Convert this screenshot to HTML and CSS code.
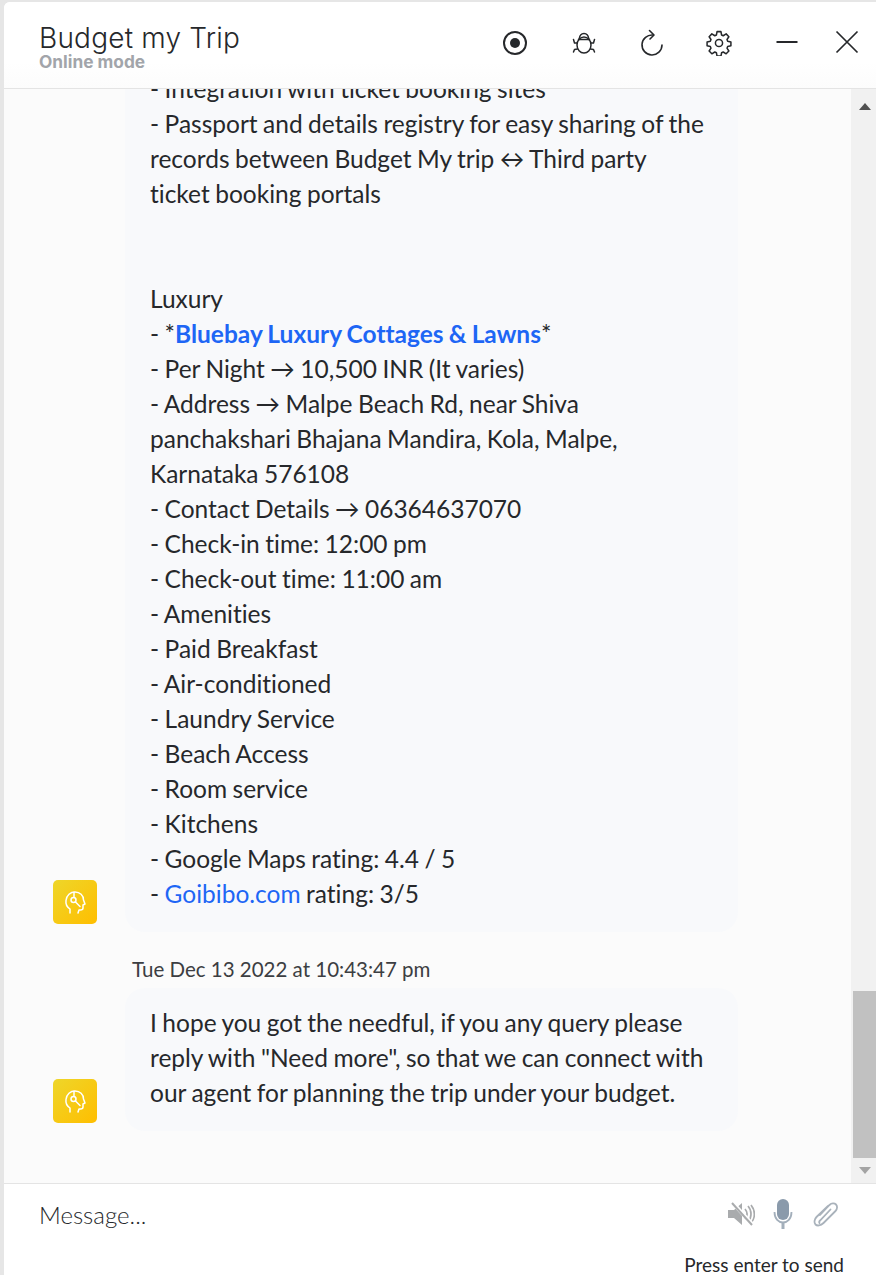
FILE: index.html
```html
<!DOCTYPE html>
<html lang="en">
<head>
<meta charset="utf-8">
<title>Budget my Trip</title>
<link rel="stylesheet" href="styles.css">
</head>
<body>
<div class="window">
  <header class="header">
    <div class="titles">
      <div class="title">Budget my Trip</div>
      <div class="subtitle">Online mode</div>
    </div>
    <div class="tools">
      <svg class="tool t-rec" width="26" height="26" viewBox="0 0 26 26"><circle cx="13" cy="13" r="11" fill="none" stroke="#26282b" stroke-width="2"/><circle cx="13" cy="13" r="5" fill="#26282b"/></svg>
      <svg class="tool t-bug" width="26" height="26" viewBox="0 0 26 26" fill="none" stroke="#26282b" stroke-width="1.500" stroke-linecap="round" stroke-linejoin="round"><ellipse cx="13" cy="15" rx="7" ry="8"/><path d="M8 9.500C8.500 5.500 10.500 3.500 13 3.500s4.500 2 5 6"/><path d="M7.500 9.500h11"/><path d="M6 13H3.500L2.500 9.500M20 13h2.500l1-3.500M6.500 19l-3 .5-1 2.500M19.500 19l3 .5 1 2.500"/></svg>
      <svg class="tool t-redo" width="26" height="28" viewBox="0 0 26 28" fill="none" stroke="#26282b" stroke-width="1.600" stroke-linecap="round" stroke-linejoin="round"><path d="M14 6A10 10 0 1 0 23 16"/><path d="M10.500 1.500L15 6l-4 4"/></svg>
      <svg class="tool t-gear" width="26" height="26" viewBox="0 0 24 24" fill="none" stroke="#26282b" stroke-width="1.400" stroke-linejoin="round"><circle cx="12" cy="12" r="3.300"/><path d="M10.200 1.500h3.600l.6 3.100 1.500.7 2.700-1.700 2.500 2.600-1.700 2.600.6 1.500 3 .7v3.600l-3 .7-.6 1.500 1.700 2.600-2.500 2.600-2.700-1.700-1.500.7-.6 3.100h-3.600l-.6-3.100-1.500-.7-2.700 1.700-2.500-2.600 1.700-2.600-.6-1.500-3-.7v-3.600l3-.7.6-1.500-1.700-2.600 2.500-2.600 2.700 1.700 1.500-.7z"/></svg>
      <svg class="tool t-min" width="24" height="24" viewBox="0 0 24 24"><path d="M1.500 12h21" stroke="#26282b" stroke-width="2"/></svg>
      <svg class="tool t-close" width="24" height="24" viewBox="0 0 24 24"><path d="M1.500 1.500l21 21M22.500 1.500l-21 21" stroke="#26282b" stroke-width="1.700"/></svg>
    </div>
  </header>

  <main class="chat">
    <div class="messages">
      <div class="message">
        <div class="avatar"><svg width="26" height="26" viewBox="0 0 26 26" fill="none" stroke="#fff" stroke-width="1.500" stroke-linecap="round" stroke-linejoin="round"><path d="M8 24v-4C5 18 3.500 15 4 11.500 4.500 6 8.500 3 13 3c5 0 8.500 3.500 8.500 8l1.500 4-2 1v3c0 1.500-1 2-2.500 2h-1.500l-1 3"/><path d="M12 3.200V8"/><circle cx="11.500" cy="11" r="2.500"/><path d="M13.500 13l4.500 4.500"/></svg></div>
        <div class="bubble">
          <p>- Integration with ticket booking sites</p>
          <p>- Passport and details registry for easy sharing of the</p>
          <p>records between Budget My trip ↔ Third party</p>
          <p>ticket booking portals</p>
          <p>&nbsp;</p>
          <p>&nbsp;</p>
          <p>Luxury</p>
          <p>- *<a class="hotel" href="#">Bluebay Luxury Cottages &amp; Lawns</a>*</p>
          <p>- Per Night → 10,500 INR (It varies)</p>
          <p>- Address → Malpe Beach Rd, near Shiva</p>
          <p>panchakshari Bhajana Mandira, Kola, Malpe,</p>
          <p>Karnataka 576108</p>
          <p>- Contact Details → 06364637070</p>
          <p>- Check-in time: 12:00 pm</p>
          <p>- Check-out time: 11:00 am</p>
          <p>- Amenities</p>
          <p>- Paid Breakfast</p>
          <p>- Air-conditioned</p>
          <p>- Laundry Service</p>
          <p>- Beach Access</p>
          <p>- Room service</p>
          <p>- Kitchens</p>
          <p>- Google Maps rating: 4.4 / 5</p>
          <p>- <a class="link" href="#">Goibibo.com</a> rating: 3/5</p>
        </div>
      </div>
      <div class="stamp">Tue Dec 13 2022 at 10:43:47 pm</div>
      <div class="message">
        <div class="avatar"><svg width="26" height="26" viewBox="0 0 26 26" fill="none" stroke="#fff" stroke-width="1.500" stroke-linecap="round" stroke-linejoin="round"><path d="M8 24v-4C5 18 3.500 15 4 11.500 4.500 6 8.500 3 13 3c5 0 8.500 3.500 8.500 8l1.500 4-2 1v3c0 1.500-1 2-2.500 2h-1.500l-1 3"/><path d="M12 3.200V8"/><circle cx="11.500" cy="11" r="2.500"/><path d="M13.500 13l4.500 4.500"/></svg></div>
        <div class="bubble">
          <p>I hope you got the needful, if you any query please</p>
          <p>reply with "Need more", so that we can connect with</p>
          <p>our agent for planning the trip under your budget.</p>
        </div>
      </div>
    </div>
    <div class="scrollbar">
      <div class="arrow arrow-up"></div>
      <div class="track"><div class="thumb"></div></div>
      <div class="arrow arrow-down"></div>
    </div>
  </main>

  <footer class="composer">
    <div class="input-row">
      <div class="placeholder">Message...</div>
      <div class="input-icons">
        <svg width="28" height="28" viewBox="0 0 28 28" fill="none"><path d="M1 10h6l8-7v22l-8-7H1z" fill="#a9abad"/><path d="M18 9c2.500 3 2.500 7 0 10M21 6c4 4.500 4 11.500 0 16M24 5c4.500 5.500 4.500 13 0 18" stroke="#a9abad" stroke-width="1.700"/><path d="M5 2l21 23" stroke="#fff" stroke-width="4"/><path d="M5 3l20 22" stroke="#a9abad" stroke-width="2"/></svg>
        <svg width="20" height="32" viewBox="0 0 20 32" fill="none"><rect x="4" y="1" width="12" height="21" rx="6" fill="#8a9aab"/><path d="M1.500 14c0 14 17 14 17 0" stroke="#a3afbb" stroke-width="1.800"/><path d="M10 24v7" stroke="#a3afbb" stroke-width="3"/></svg>
        <svg class="clip" width="30" height="30" viewBox="0 0 30 30" fill="none" stroke="#a9b2bb" stroke-width="1.800" stroke-linecap="round"><path d="M9 16l9.500-10c2-2 5-2 6.500-.5s1.500 4.500-.5 6.500L12.500 24c-3 3-6.500 3-8 1.500s-1.500-5 1-7.500L17 7"/><path d="M19.500 10.500L9 21.500c-1 1-1 2-.5 2.500"/></svg>
      </div>
    </div>
    <div class="hint">Press enter to send</div>
  </footer>
</div>
</body>
</html>
```
FILE: styles.css
```css
* { box-sizing: border-box; }
html, body { height: 100%; }
body {
  margin: 0;
  padding: 2px 0 0 4px;
  background: #e6e6e6;
  font-family: "Lato", "Liberation Sans", sans-serif;
  font-variant-ligatures: none;
  color: #26282b;
  overflow: hidden;
}
.window {
  height: 1273px;
  display: flex;
  flex-direction: column;
  background: #fff;
  border-top-left-radius: 6px;
  overflow: hidden;
}
.header {
  height: 87px;
  flex: none;
  display: flex;
  justify-content: space-between;
  padding: 20px 17px 0 35px;
  background: linear-gradient(#fff 70%, #fcfcfc);
  border-bottom: 1px solid #e4e4e4;
}
.title {
  font-family: "Inter", sans-serif;
  font-size: 28px;
  line-height: 32px;
  letter-spacing: 0.2px;
  font-weight: 300;
  color: #26282b;
}
.subtitle {
  font-family: "Inter", sans-serif;
  font-size: 17.300px;
  line-height: 16px;
  font-weight: 700;
  color: #a2a5aa;
}
.tools {
  display: flex;
  align-items: flex-start;
  margin-top: 8px;
}
.tool { display: block; flex: none; }
.t-rec { margin-right: 43px; }
.t-bug { margin-right: 42px; }
.t-redo { margin-right: 41px; margin-top: -1px; }
.t-gear { margin-right: 43px; }
.t-min { margin-right: 36px; }
.chat {
  flex: 1;
  min-height: 0;
  display: flex;
  background: #fbfbfb;
  border-bottom: 1px solid #e4e4e4;
}
.messages {
  flex: 1;
  min-width: 0;
  overflow: hidden;
  display: flex;
  flex-direction: column;
  justify-content: flex-end;
  padding: 0 113px 52px 49px;
}
.message {
  flex: none;
  display: flex;
  align-items: flex-end;
  gap: 28px;
}
.avatar {
  flex: none;
  width: 44px;
  height: 44px;
  margin-bottom: 8px;
  border-radius: 5px;
  background: linear-gradient(135deg, #eed62a, #ffbe00);
  display: flex;
  align-items: center;
  justify-content: center;
}
.bubble {
  flex: 1;
  background: #f8f9fb;
  border-radius: 20px;
  padding: 17px 20px 21px 25px;
  font-size: 24.500px;
  word-spacing: -0.8px;
  line-height: 35px;
  color: #26282b;
}
.bubble p { margin: 0; white-space: nowrap; }
.hotel { color: #1e66f5; font-weight: 700; text-decoration: none; }
.link { color: #1e66f5; text-decoration: none; }
.stamp {
  flex: none;
  margin: 25px 0 7px 79px;
  font-size: 20.500px;
  line-height: 24px;
  color: #3c3e42;
}
.scrollbar {
  flex: none;
  width: 25px;
  background: #f1f1f1;
  display: flex;
  flex-direction: column;
}
.arrow { flex: none; height: 17px; display: flex; align-items: center; justify-content: center; padding-left: 2px; }
.arrow::before {
  content: "";
  width: 0;
  height: 0;
  border-left: 6px solid transparent;
  border-right: 6px solid transparent;
}
.arrow-up { height: 34px; }
.arrow-up::before { border-bottom: 7px solid #505050; }
.arrow-down { height: 25px; }
.arrow-down::before { border-top: 7px solid #a3a3a3; }
.track { flex: 1; display: flex; flex-direction: column; justify-content: flex-end; padding: 0 0 0 2px; }
.thumb { height: 167px; background: #c1c1c1; }
.composer { flex: none; height: 91px; padding: 0 35px 0 35px; background: #fff; }
.input-row {
  display: flex;
  justify-content: space-between;
  align-items: center;
  height: 60px;
}
.placeholder { font-size: 24px; font-weight: 300; color: #26282b; }
.input-icons { display: flex; align-items: center; gap: 18px; }
.hint {
  margin-top: 10px;
  margin-right: -3px;
  font-size: 19px;
  line-height: 22px;
  text-align: right;
  color: #26282b;
}
```
